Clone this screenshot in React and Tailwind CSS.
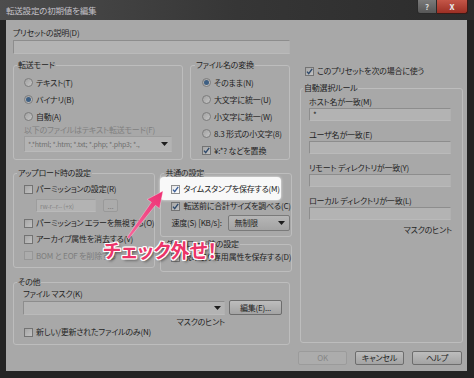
import React from "react";

function Group({ title, className = "", legend = "ml-[4px]", children }) {
  return (
    <fieldset className={`border border-[#bdbdbd] rounded-[3px] ${className}`}>
      <legend className={`${legend} px-[1px] leading-[14px]`}>{title}</legend>
      {children}
    </fieldset>
  );
}

function Radio({ checked, children, className = "" }) {
  return (
    <div className={`flex items-center h-[17px] ${className}`}>
      <span className="mr-[3px] flex h-[9px] w-[9px] shrink-0 items-center justify-center rounded-full border border-[#7c7c7c] bg-gradient-to-br from-[#a2a2a2] to-[#c4c4c4]">
        {checked && <span className="h-[5px] w-[5px] rounded-full bg-[#3e5f83]" />}
      </span>
      <span className="whitespace-nowrap">{children}</span>
    </div>
  );
}

function Check({ checked, disabled, children, className = "", light }) {
  let box = "border-[#737373] bg-gradient-to-br from-[#a6a6a6] to-[#c2c2c2]";
  if (disabled) box = "border-[#979797] bg-[#acacac]";
  if (light) box = "border-[#8e8f8f] bg-gradient-to-br from-[#e6e6e6] to-[#ffffff]";
  return (
    <div className={`flex items-center ${className}`}>
      <span className={`relative mr-[3px] h-[9px] w-[9px] shrink-0 border ${box}`}>
        {checked && (
          <svg viewBox="0 0 9 9" className="absolute -left-px -top-px h-[9px] w-[9px]">
            <path d="M2 4.6 L3.7 6.6 L7.2 1.8" stroke={light ? "#3b5f99" : "#2f4a6c"} strokeWidth="1.4" fill="none" />
          </svg>
        )}
      </span>
      <span className={`whitespace-nowrap ${disabled ? "text-[#7d7d7d]" : ""}`}>{children}</span>
    </div>
  );
}

function Input({ className = "", children }) {
  return (
    <div className={`flex items-center border border-[#8d8d8d] border-b-[#bababa] border-r-[#b0b0b0] bg-[#b3b3b3] pl-[3px] leading-[10px] ${className}`}>
      {children}
    </div>
  );
}

function Arrow() {
  return (
    <svg viewBox="0 0 7 4" className="h-[4px] w-[7px] shrink-0">
      <path d="M0 0 H7 L3.5 4 Z" fill="#1d1d1d" />
    </svg>
  );
}

function Button({ children, disabled, className = "" }) {
  return (
    <div
      className={`flex items-center justify-center rounded-[2px] border ${
        disabled
          ? "border-[#9b9b9b] bg-[#acacac] text-[#868686]"
          : "border-[#6d6d6d] bg-gradient-to-b from-[#bdbdbd] to-[#a3a3a3] text-[#1c1c1c]"
      } ${className}`}
    >
      {children}
    </div>
  );
}

export default function App() {
  return (
    <div className="relative h-[378px] w-[474px] overflow-hidden bg-[#242424] font-['Noto_Sans_CJK_JP',sans-serif] text-[8px] tracking-[-0.2px] text-[#1f1f1f] [font-feature-settings:'palt']">
      {/* title bar */}
      <div className="flex h-[20px] items-start bg-gradient-to-r from-[#4d4d4d] via-[#363636] to-[#2c2c2c]">
        <div className="pl-[6px] pt-[3px] text-[8.5px] leading-[14px] text-[#c3c1c8]">転送設定の初期値を編集</div>
        <div className="ml-auto mr-[6px] flex">
          <div className="flex h-[14px] w-[20px] items-center justify-center rounded-bl-[3px] border border-t-0 border-[#2a2a2a] bg-gradient-to-b from-[#7a7a7a] to-[#575757] text-[8px] font-bold text-[#d8d8d8]">
            ?
          </div>
          <div className="flex h-[14px] w-[31px] items-center justify-center rounded-br-[3px] border border-l-0 border-t-0 border-[#3a1a16] bg-gradient-to-b from-[#c45648] to-[#9c2f24] text-[9px] font-bold text-[#e6e6e6]">
            x
          </div>
        </div>
      </div>

      {/* dialog body */}
      <div className="ml-[6px] flex h-[351px] w-[461px] flex-col bg-[#a8a8a8]">
        <div className="pl-[7px] pt-[6px]">
          <div className="leading-[14px]">プリセットの説明(D)</div>
          <Input className="h-[14px] w-[277px]" />
        </div>

        <div className="mt-[4px] flex pl-[7px]">
          {/* left column */}
          <div className="flex w-[277px] flex-col">
            <div className="flex">
              <Group title="転送モード" className="h-[102px] w-[170px] pl-[10px]" legend="ml-[-7px]">
                <Radio className="mt-[2px]">テキスト(T)</Radio>
                <Radio checked>バイナリ(B)</Radio>
                <Radio>自動(A)</Radio>
                <div className="mt-[-1px] leading-[12px] text-[#808080]">以下のファイルはテキスト転送モード(F)</div>
                <Input className="h-[16px] w-[148px] border-[#9d9d9d] pr-[3px] text-[7px] text-[#6f6f6f]">
                  <span className="flex-1 truncate">*.*html; *.htm; *.txt; *.php; *.php3; *.,</span>
                  <Arrow />
                </Input>
              </Group>
              <Group title="ファイル名の変換" className="ml-[7px] h-[102px] w-[100px] pl-[11px]" legend="ml-[-7px]">
                <Radio checked className="mt-[2px]">そのまま(N)</Radio>
                <Radio>大文字に統一(U)</Radio>
                <Radio>小文字に統一(W)</Radio>
                <Radio>8.3 形式の小文字(8)</Radio>
                <Check checked className="h-[17px]">¥:*? などを置換</Check>
              </Group>
            </div>

            <div className="mt-[6px] flex">
              <Group title="アップロード時の設定" className="h-[102px] w-[135px] pl-[10px]" legend="ml-[-7px]">
                <Check className="mt-[0.5px] h-[17px]">パーミッションの設定(R)</Check>
                <div className="ml-[12px] mt-[1.5px] flex">
                  <Input className="h-[13px] w-[60px] border-[#9d9d9d] text-[6.5px] text-[#858585]">rw-r--r-- (+x)</Input>
                  <div className="ml-[7px] flex h-[13px] w-[15px] items-center justify-center rounded-[2px] border border-[#999] bg-[#ababab] leading-none text-[#7c7c7c]">
                    ...
                  </div>
                </div>
                <Check className="mt-[3px] h-[16px]">パーミッション エラーを無視する(O)</Check>
                <Check className="h-[16px]">アーカイブ属性を消去する(V)</Check>
                <Check disabled className="h-[17px]">BOM と EOF を削除する</Check>
              </Group>
              <div className="ml-[5px] flex w-[137px] flex-col">
                <Group title="共通の設定" className="h-[71px] pl-[10px]" legend="ml-[-7px]">
                  <div className="relative mt-[0.5px] h-[17px]">
                    <div className="absolute left-[-11px] top-[-3.5px] h-[23px] w-[121px] rounded-[4px] bg-[#f8f8f8] shadow-[0_0_3px_rgba(255,255,255,0.8)]" />
                    <Check checked light className="relative h-[17px] text-[#1a1a1a]">
                      タイムスタンプを保存する(M)
                    </Check>
                  </div>
                  <Check checked className="h-[17px]">転送前に合計サイズを調べる(C)</Check>
                  <div className="flex h-[16px] items-center">
                    <span className="w-[57px] whitespace-nowrap">速度(S) [KB/s]:</span>
                    <div className="flex h-[16px] w-[62px] items-center rounded-[2px] border border-[#7a7a7a] bg-gradient-to-b from-[#b6b6b6] to-[#a4a4a4] pl-[5px] pr-[4px]">
                      <span className="flex-1">無制限</span>
                      <Arrow />
                    </div>
                  </div>
                </Group>
                <Group title="ダウンロード時の設定" className="h-[35px] pl-[10px]" legend="ml-[-7px]">
                  <Check className="h-[12px]">読み取り専用属性を保存する(D)</Check>
                </Group>
              </div>
            </div>

            <Group title="その他" className="mt-[3px] h-[70px] pl-[9px]" legend="ml-[-6px]">
              <div className="mt-[-1px] leading-[12px]">ファイル マスク(K)</div>
              <div className="flex items-end">
                <Input className="h-[14px] w-[202px] pr-[3px]">
                  <span className="flex-1" />
                  <Arrow />
                </Input>
                <Button className="ml-[4px] h-[15px] w-[53px]">編集(E)...</Button>
              </div>
              <div className="mt-[1px] w-[202px] text-right leading-[12px]">マスクのヒント</div>
              <Check className="ml-[1px] mt-[-4px] h-[16px]">新しい/更新されたファイルのみ(N)</Check>
            </Group>
          </div>

          {/* right column */}
          <div className="ml-[10px] w-[163px]">
            <Check checked className="ml-[5px] mt-[6px] h-[14px]">このプリセットを次の場合に使う</Check>
            <Group title="自動選択ルール" className="mt-[3px] h-[262px] pl-[8px] pr-[10px]" legend="ml-[-6px]">
              <div className="mt-[1px] leading-[12px]">ホスト名が一致(M)</div>
              <Input className="h-[13px] w-[142px]">*</Input>
              <div className="mt-[8px] leading-[12px]">ユーザ名が一致(E)</div>
              <Input className="h-[13px] w-[142px]" />
              <div className="mt-[8px] leading-[12px]">リモート ディレクトリが一致(Y)</div>
              <Input className="h-[13px] w-[142px]" />
              <div className="mt-[8px] leading-[12px]">ローカル ディレクトリが一致(L)</div>
              <Input className="h-[13px] w-[142px]" />
              <div className="mt-[4px] text-right leading-[12px]">マスクのヒント</div>
            </Group>
          </div>
        </div>

        <div className="mb-[6px] mt-auto flex justify-end gap-[8px] pr-[5px]">
          <Button disabled className="h-[14px] w-[49px]">OK</Button>
          <Button className="h-[14px] w-[49px]">キャンセル</Button>
          <Button className="h-[14px] w-[50px]">ヘルプ</Button>
        </div>
      </div>

      {/* annotation overlay */}
      <svg className="pointer-events-none absolute left-0 top-0" width="474" height="378">
        <defs>
          <linearGradient id="arr" x1="128" y1="238" x2="163" y2="191" gradientUnits="userSpaceOnUse">
            <stop offset="0" stopColor="#f4679a" />
            <stop offset="1" stopColor="#ee2f73" />
          </linearGradient>
        </defs>
        <polygon
          points="163,191 159.5,208.5 155.4,205.3 129,238.8 127,237.2 151.4,202.3 147.3,199.3"
          fill="url(#arr)"
          stroke="#ffffff"
          strokeOpacity="0.5"
          strokeWidth="0.6"
        />
      </svg>
      <div className="absolute left-[103px] top-[237px] text-[19px] font-bold leading-[26px] tracking-normal text-[#ec3569] [text-shadow:-1px_-1px_0_#fff,1px_-1px_0_#fff,-1px_1px_0_#fff,1px_1px_0_#fff,0_-1px_0_#fff,0_1px_0_#fff,-1px_0_0_#fff,1px_0_0_#fff,2px_2px_3px_rgba(0,0,0,0.55)]">
        チェック外せ！
      </div>
    </div>
  );
}
